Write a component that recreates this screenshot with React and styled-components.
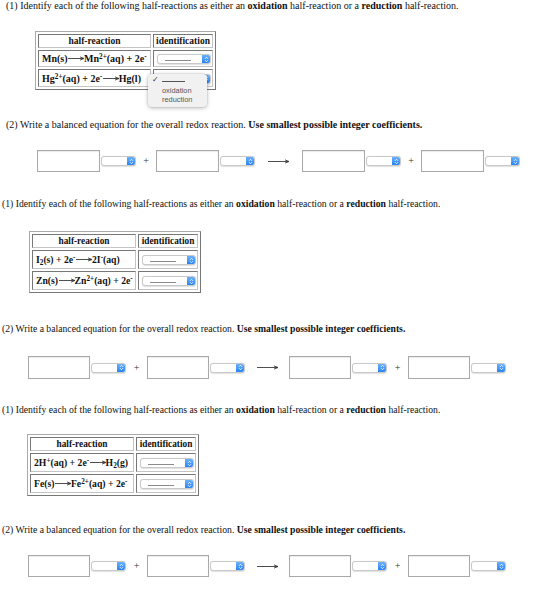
import styled, { createGlobalStyle } from "styled-components";

const GlobalStyle = createGlobalStyle`
  html, body { margin:0; padding:0; background:#fff; }
  body { font-family:"Liberation Serif", "Times New Roman", serif; color:#111; }
`;

// per-section tuning (the three screenshots differ slightly in scale)
const sections = [
  {
    key: "mn-hg",
    gap: 0, promptLeft: 6, fs: 10, tfs: 10, hfs: 9.5, tableGap: 19, tableLeft: 35, cols: [113, 59],
    rows: [14, 17, 18], eqTitleGap: 29, eqGap: 19, eqLeft: 37, box: 63, boxH: 22, plus: 20, arrow: 47,
    reactions: () => [
      [<>Mn(s)</>, <>Mn<Sup>2+</Sup>(aq) + 2e<Sup>-</Sup></>],
      [<>Hg<Sup>2+</Sup>(aq) + 2e<Sup>-</Sup></>, <>Hg(l)</>],
    ],
    openRow: 1,
  },
  {
    key: "i-zn",
    gap: 26, promptLeft: 2, fs: 9.7, tfs: 9.7, hfs: 9.3, tableGap: 21, tableLeft: 29, cols: [104, 59],
    rows: [14, 19, 19], eqTitleGap: 30, eqGap: 21, eqLeft: 28, box: 62, boxH: 23, plus: 21, arrow: 44,
    reactions: () => [
      [<>I<Sub>2</Sub>(s) + 2e<Sup>-</Sup></>, <>2I<Sup>-</Sup>(aq)</>],
      [<>Zn(s)</>, <>Zn<Sup>2+</Sup>(aq) + 2e<Sup>-</Sup></>],
    ],
  },
  {
    key: "h-fe",
    gap: 25, promptLeft: 2, fs: 9.7, tfs: 9.7, hfs: 9.3, tableGap: 18, tableLeft: 27, cols: [104, 60],
    rows: [14, 19, 19], eqTitleGap: 28, eqGap: 19, eqLeft: 28, box: 62, boxH: 22, plus: 21, arrow: 44,
    reactions: () => [
      [<>2H<Sup>+</Sup>(aq) + 2e<Sup>-</Sup></>, <>H<Sub>2</Sub>(g)</>],
      [<>Fe(s)</>, <>Fe<Sup>2+</Sup>(aq) + 2e<Sup>-</Sup></>],
    ],
  },
];

function Chevrons() {
  return (
    <svg width="5" height="7" viewBox="0 0 5 7">
      <path d="M1 2.8 L2.5 1.3 L4 2.8 M1 4.2 L2.5 5.7 L4 4.2" fill="none" stroke="#fff" strokeWidth="0.9" />
    </svg>
  );
}

function Arrow({ w = 16 }) {
  return (
    <ArrowSvg width={w} height="5" viewBox={`0 0 ${w} 5`}>
      <line x1="0" y1="2.5" x2={w - 1} y2="2.5" stroke="#222" strokeWidth="0.8" />
      <path d={`M${w - 4} 0.9 L${w} 2.5 L${w - 4} 4.1`} fill="none" stroke="#222" strokeWidth="0.8" />
    </ArrowSvg>
  );
}

function Dropdown({ width, dash, open }) {
  return (
    <SelectWrap>
      <Select $w={width}>
        <SelectValue>{dash && <Dash />}</SelectValue>
        <SelectButton><Chevrons /></SelectButton>
      </Select>
      {open && (
        <Menu>
          <MenuItem $checked><Check>✓</Check><Dash $menu /></MenuItem>
          <MenuItem>oxidation</MenuItem>
          <MenuItem>reduction</MenuItem>
        </Menu>
      )}
    </SelectWrap>
  );
}

function Term({ s }) {
  return (
    <>
      <AnswerBox $w={s.box} $h={s.boxH} />
      <Dropdown width={35} />
    </>
  );
}

function Section({ s }) {
  return (
    <Block $gap={s.gap}>
      <Prompt $left={s.promptLeft} $fs={s.fs}>
        (1) Identify each of the following half-reactions as either an <b>oxidation</b> half-reaction or a <b>reduction</b> half-reaction.
      </Prompt>
      <HalfTable $gap={s.tableGap} $left={s.tableLeft} $fs={s.tfs}>
        <tbody>
          <tr>
            <HeadCell $w={s.cols[0]} $h={s.rows[0]} $fs={s.hfs}>half-reaction</HeadCell>
            <HeadCell $w={s.cols[1]} $h={s.rows[0]} $fs={s.hfs}>identification</HeadCell>
          </tr>
          {s.reactions().map((r, idx) => (
            <tr key={idx}>
              <Cell $h={s.rows[idx + 1]}>
                {r[0]}<Arrow />{r[1]}
              </Cell>
              <Cell $h={s.rows[idx + 1]} $center>
                <Dropdown width={54} dash open={s.openRow === idx} />
              </Cell>
            </tr>
          ))}
        </tbody>
      </HalfTable>
      <Prompt $left={s.promptLeft} $fs={s.fs} $gap={s.eqTitleGap}>
        (2) Write a balanced equation for the overall redox reaction. <b>Use smallest possible integer coefficients.</b>
      </Prompt>
      <EquationRow $gap={s.eqGap} $left={s.eqLeft}>
        <Term s={s} />
        <Plus $w={s.plus}>+</Plus>
        <Term s={s} />
        <ArrowSlot $w={s.arrow}><Arrow w={21} /></ArrowSlot>
        <Term s={s} />
        <Plus $w={s.plus}>+</Plus>
        <Term s={s} />
      </EquationRow>
    </Block>
  );
}

export default function App() {
  return (
    <>
      <GlobalStyle />
      <Page>
        {sections.map((s) => <Section key={s.key} s={s} />)}
      </Page>
    </>
  );
}

const Page = styled.div`
  display:flex;
  flex-direction:column;
  width:545px;
`;
const Block = styled.section`
  display:flex;
  flex-direction:column;
  align-items:flex-start;
  margin-top:${p => p.$gap}px;
`;
const Prompt = styled.p`
  margin:${p => p.$gap || 0}px 0 0;
  padding-left:${p => p.$left}px;
  height:12px;
  font-size:${p => p.$fs}px;
  line-height:12px;
  white-space:nowrap;
  color:#111;
  b { font-weight:700; }
`;
const HalfTable = styled.table`
  margin:${p => p.$gap}px 0 0 ${p => p.$left}px;
  border-collapse:separate;
  border-spacing:2px;
  border:1px solid;
  border-color:#aaa #777 #777 #aaa;
  font-size:${p => p.$fs}px;
  line-height:11px;
  font-weight:700;
  table-layout:fixed;
`;
const HeadCell = styled.td`
  width:${p => p.$w}px;
  height:${p => p.$h}px;
  box-sizing:border-box;
  padding:0;
  border:1px solid;
  border-color:#777 #c4c4c4 #c4c4c4 #777;
  font-size:${p => p.$fs}px;
  text-align:center;
  vertical-align:middle;
  white-space:nowrap;
`;
const Cell = styled.td`
  height:${p => p.$h}px;
  box-sizing:border-box;
  padding:0 0 0 3px;
  border:1px solid;
  border-color:#777 #c4c4c4 #c4c4c4 #777;
  vertical-align:middle;
  white-space:nowrap;
  text-align:${p => (p.$center ? "center" : "left")};
  ${p => p.$center && "padding:0 1px 0 3px;"}
`;
const Sup = styled.sup`
  font-size:7.2px;
  line-height:0;
  vertical-align:3.5px;
`;
const Sub = styled.sub`
  font-size:7.2px;
  line-height:0;
  vertical-align:-2px;
`;
const ArrowSvg = styled.svg`
  display:inline-block;
  vertical-align:1px;
  margin:0 0 0 0.5px;
`;
const SelectWrap = styled.div`
  position:relative;
  display:inline-flex;
  vertical-align:middle;
`;
const Select = styled.div`
  display:flex;
  width:${p => p.$w}px;
  height:10px;
  box-sizing:border-box;
  border:1px solid #c9c9c9;
  border-radius:3px;
  background:#fff;
  overflow:hidden;
  box-shadow:0 0.5px 1px rgba(0,0,0,.12);
`;
const SelectValue = styled.div`
  flex:1;
  display:flex;
  align-items:center;
  padding:2px 0 0 7px;
`;
const Dash = styled.span`
  display:block;
  width:${p => (p.$menu ? 23 : 26)}px;
  height:1px;
  background:${p => (p.$menu ? "#555" : "#8a8a8a")};
`;
const SelectButton = styled.div`
  display:flex;
  align-items:center;
  justify-content:center;
  width:9px;
  margin:-1px -1px -1px 0;
  border-radius:0 3px 3px 0;
  background:linear-gradient(#74b6ff, #1f7ef5);
`;
const Menu = styled.div`
  position:absolute;
  z-index:5;
  left:-9px;
  top:0;
  width:59px;
  height:33px;
  box-sizing:border-box;
  padding-top:2px;
  border-radius:4px;
  background:#f1f1f1;
  box-shadow:0 1px 4px rgba(0,0,0,.28), 0 0 0 0.5px rgba(0,0,0,.08);
  font-family:"Liberation Sans", Arial, sans-serif;
  font-size:7.4px;
  line-height:9px;
  font-weight:400;
  color:#555;
  text-align:left;
`;
const MenuItem = styled.div`
  position:relative;
  display:flex;
  align-items:center;
  height:9px;
  padding-left:14px;
  ${p => p.$checked && "padding-top:1px;"}
`;
const Check = styled.span`
  position:absolute;
  left:4px;
  top:-1px;
  font-family:"DejaVu Sans", sans-serif;
  font-size:8px;
  color:#333;
`;
const EquationRow = styled.div`
  display:flex;
  align-items:center;
  margin:${p => p.$gap}px 0 0 ${p => p.$left}px;
  ${SelectWrap} { margin-left:1px; }
`;
const AnswerBox = styled.div`
  width:${p => p.$w}px;
  height:${p => p.$h}px;
  box-sizing:border-box;
  border:1px solid #a9a9a9;
  box-shadow:inset 0 1px 1px rgba(0,0,0,.08);
  background:#fff;
`;
const Plus = styled.span`
  width:${p => p.$w}px;
  text-align:center;
  font-size:10px;
  line-height:10px;
  color:#333;
`;
const ArrowSlot = styled.span`
  display:flex;
  justify-content:center;
  width:${p => p.$w}px;
`;
